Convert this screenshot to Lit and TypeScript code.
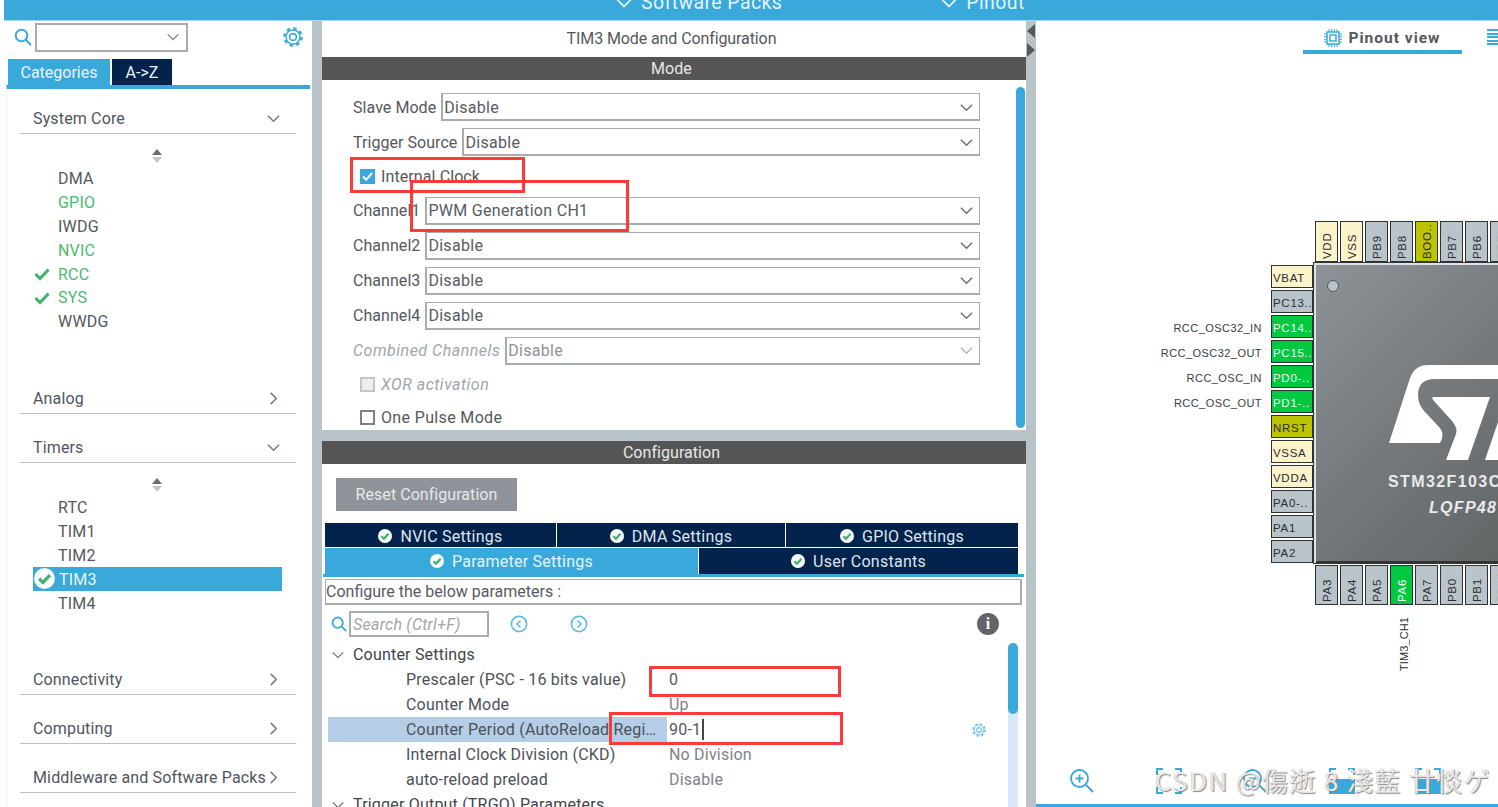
import { LitElement, html, css } from "lit";
import { customElement } from "lit/decorators.js";

const BLUE = "#39a9dc";
const chev = (dir: string = "down", color = "#7a7d80", s = 14) => {
  const pts = dir === "down" ? "2,5 8,11 14,5" : "5,2 11,8 5,14";
  return html`<svg width=${s} height=${s} viewBox="0 0 16 16" fill="none" stroke=${color} stroke-width="1.6"><polyline points=${pts}></polyline></svg>`;
};
const searchIcon = (s = 18) => html`<svg width=${s} height=${s} viewBox="0 0 18 18" fill="none" stroke=${BLUE} stroke-width="2"><circle cx="7.5" cy="7.5" r="5.8"></circle><path d="M11.8 11.8L17 17"></path></svg>`;
const gear = (s = 20, op = 1) => html`<svg width=${s} height=${s} viewBox="0 0 20 20" fill="none" stroke=${BLUE} opacity=${op}><circle cx="10" cy="10" r="8.6" stroke-width="2.4" stroke-dasharray="3.4 3.35"></circle><circle cx="10" cy="10" r="7" stroke-width="1.4"></circle><circle cx="10" cy="10" r="3.4" stroke-width="1.6"></circle></svg>`;
const okBadge = (s = 14) => html`<svg width=${s} height=${s} viewBox="0 0 14 14"><circle cx="7" cy="7" r="7" fill="#d8f0df"></circle><circle cx="7" cy="7" r="6.6" fill="#fff" opacity=".9"></circle><polyline points="3.4,7.2 6,9.6 10.6,4.8" fill="none" stroke="#3cb371" stroke-width="2.2"></polyline></svg>`;
const circArrow = (left: boolean) => html`<svg width="18" height="18" viewBox="0 0 18 18" fill="none" stroke=${BLUE} stroke-opacity=".8" stroke-width="1.6"><circle cx="9" cy="9" r="7.6"></circle><polyline points=${left ? "10.5,5.5 7,9 10.5,12.5" : "7.5,5.5 11,9 7.5,12.5"}></polyline></svg>`;
const bigCheck = html`<svg width="16" height="14" viewBox="0 0 16 14" fill="none" stroke="#3cb371" stroke-width="3"><polyline points="1.5,7 6,11.5 14.5,2.5"></polyline></svg>`;
const sortIcon = html`<svg width="12" height="14" viewBox="0 0 12 14"><polygon points="6,0 11,6 1,6" fill="#6a6d70"></polygon><polygon points="6,14 11,8 1,8" fill="#c4c6c8"></polygon></svg>`;

type Pin = [string, string];
const leftPins: Pin[] = [["VBAT","c"],["PC13..","g"],["PC14..","n"],["PC15..","n"],["PD0-..","n"],["PD1-..","n"],["NRST","o"],["VSSA","c"],["VDDA","c"],["PA0-..","g"],["PA1","g"],["PA2","g"]];
const topPins: Pin[] = [["VDD","c"],["VSS","c"],["PB9","g"],["PB8","g"],["BOO..","o"],["PB7","g"],["PB6","g"],["PB5","g"]];
const botPins: Pin[] = [["PA3","g"],["PA4","g"],["PA5","g"],["PA6","n"],["PA7","g"],["PB0","g"],["PB1","g"],["PB10","g"]];
const pinLabels: [string, number][] = [["RCC_OSC32_IN",2],["RCC_OSC32_OUT",3],["RCC_OSC_IN",4],["RCC_OSC_OUT",5]];
const CX = 1036, CY = 54;
const at = (x: number, y: number, w?: number, h?: number) =>
  `left:${x - CX}px;top:${y - CY}px;` + (w ? `width:${w}px;` : "") + (h ? `height:${h}px;` : "");

@customElement("app-root")
export class AppRoot extends LitElement {
  static styles = css`
    :host { display:block; position:relative; width:1498px; height:807px; overflow:hidden; background:#fff;
      font-family:Roboto,"Liberation Sans",sans-serif; font-size:16px; letter-spacing:.25px; color:#55585c; }
    * { box-sizing:border-box; }
    .top { height:21px; margin-left:4px; background:#39a9dc; border-bottom:1px solid #a9d8ef; overflow:hidden; display:flex; padding-left:611px; color:#e4f3fa; }
    .top-item { display:flex; align-items:center; gap:8px; font-size:19.5px; letter-spacing:.4px; line-height:22px; margin-top:-8px; height:22px; }
    .top-item + .top-item { margin-left:158px; }
    .main { display:flex; height:786px; }
    .left { width:308px; margin-left:4px; display:flex; flex-direction:column; }
    .search { height:38px; flex:none; display:flex; align-items:center; padding:0 9px 6px 10px; }
    .search svg:first-child { flex:none; }
    .combo { width:153px; height:29px; border:2px solid #a8acaf; margin-left:3px; display:flex; align-items:center; justify-content:flex-end; padding-right:6px; }
    .search .cog { margin-left:auto; display:flex; }
    .ltabs { display:flex; flex:none; height:26px; margin-left:4px; gap:2px; color:#e9f5fb; letter-spacing:0; }
    .ltab { display:flex; align-items:center; justify-content:center; width:60px; background:#03224c; }
    .ltab.on { width:102px; background:#39a9dc; }
    .panel { flex:1; min-height:0; overflow:hidden; margin:0 2px; border-top:4px solid #39a9dc; padding:0 14px 0 13px; border-left:1px solid #f0f0f0; }
    .head { height:28px; padding:0 15px 3px 13px; border-bottom:1px solid #b9c3ca; display:flex; align-items:center; justify-content:space-between; margin-top:21px; color:#4f5560; letter-spacing:.15px; white-space:nowrap; }
    .head.first { margin-top:17px; }
    .list { display:flex; flex-direction:column; }
    .sort { height:14px; margin:15px 0 4px; display:flex; justify-content:center; padding-right:3px; flex:none; }
    .sys { height:231px; } .tim { height:183px; }
    .item { height:23.8px; margin-left:13px; width:249px; display:flex; align-items:center; padding-left:25px; position:relative; letter-spacing:.2px; flex:none; }
    .item.green { color:#4cb96c; }
    .item .mark { position:absolute; left:1px; top:5px; display:flex; }
    .item.sel { background:#39a9dc; color:#e9f5fb; padding-left:26px; }
    .item.sel .mark { top:1px; left:1px; }
    .split { width:10px; background:#b9c3ca; position:relative; flex:none; }
    .tri { position:absolute; left:1px; width:0; height:0; border-top:7px solid transparent; border-bottom:7px solid transparent; }
    .tri.l { top:3px; border-right:8px solid #55585a; }
    .tri.r { top:22px; border-left:8px solid #55585a; }
    .mid { width:704px; display:flex; flex-direction:column; background:#b9c3ca; }
    .title { height:36px; flex:none; background:#fff; display:flex; align-items:center; justify-content:center; letter-spacing:-.1px; padding:0 5px 1px 0; }
    .bar { height:23px; background:#545554; color:#e8e8e8; display:flex; align-items:center; justify-content:center; letter-spacing:.05px; flex:none; padding-right:5px; }
    .mode { height:350px; background:#fff; display:flex; flex:none; }
    .form { width:627px; margin:13px 0 0 31px; display:flex; flex-direction:column; gap:7px; }
    .row { display:flex; align-items:center; gap:5px; height:28px; white-space:nowrap; letter-spacing:.05px; padding-top:0; }
    .row.dis { color:#a3a6a9; font-style:italic; letter-spacing:.5px; }
    .sel-box { flex:1; height:28px; border:2px solid #a8acaf; border-top-width:1.5px; border-right-width:1.5px; display:flex; align-items:center; justify-content:space-between; padding:1px 5px 0 1px; font-style:normal; color:#585b60; letter-spacing:.3px; }
    .row.dis .sel-box { color:#8e9195; border-color:#a8acaf; letter-spacing:.3px; }
    .chk { display:flex; align-items:center; gap:6px; margin-left:7px; white-space:nowrap; }
    .box { width:15px; height:15px; border:2px solid #7f8285; background:#fff; flex:none; display:flex; }
    .box.on { border:0; background:#39a9dc; }
    .box.dim { border-color:#c2c6c9; background:#eceeef; }
    .chk.c1 { height:27px; letter-spacing:.1px; }
    .chk.c2 { height:26px; color:#a3a6a9; font-style:italic; letter-spacing:.5px; }
    .chk.c3 { height:26px; letter-spacing:.35px; padding-top:1px; }
    .sb1 { width:9px; height:341px; margin:7px 0 0 36px; border-radius:5px; background:#39a9dc; }
    .gap { height:11px; flex:none; }
    .cfg { flex:1; background:#fff; display:flex; flex-direction:column; overflow:hidden; min-height:0; }
    .reset { width:181px; height:33px; margin:14px 0 0 14px; background:#8e9499; color:#e6e8ea; display:flex; align-items:center; justify-content:center; letter-spacing:.05px; flex:none; }
    .t1, .t2 { display:grid; width:693px; margin-left:3px; gap:1px; color:#dfe6ee; flex:none; }
    .t1 { grid-template-columns:231px 228px 232px; height:24px; margin-top:12px; }
    .t2 { grid-template-columns:373px 319px; height:26px; margin-top:1px; }
    .tb { background:#03224c; display:flex; align-items:center; justify-content:center; gap:8px; }
    .t1 .tb { padding-top:2px; }
    .tb.on { background:#39a9dc; color:#e6f4fa; }
    .rule { height:3px; background:#39a9dc; margin:0 2px 0 1px; flex:none; }
    .desc { height:26px; margin:2px 4px 0 3px; border:2px solid #a8acaf; border-top-width:1px; border-left-width:1px; display:flex; align-items:center; flex:none; color:#575a5f; white-space:nowrap; letter-spacing:0; }
    .tools { height:26px; margin-top:6px; display:flex; align-items:center; padding-left:9px; position:relative; flex:none; }
    .sinput { width:140px; height:26px; border:2px solid #a8acaf; margin-left:2px; display:flex; align-items:center; padding-left:2px; font-style:italic; color:#a3a6a9; }
    .ar1 { margin-left:21px; display:flex; } .ar2 { margin-left:42px; display:flex; }
    .info { margin-left:auto; margin-right:27px; width:22px; height:22px; border-radius:50%; background:#626467; color:#fff; font:700 16px/22px "Liberation Serif",serif; text-align:center; letter-spacing:0; }
    .treewrap { flex:1; display:flex; margin-top:5px; min-height:0; }
    .tree { width:680px; margin-left:6px; }
    .node { height:25px; display:flex; align-items:center; gap:8px; padding-left:3px; color:#3f434a; white-space:nowrap; letter-spacing:.2px; }
    .leaf { height:25px; display:flex; align-items:center; white-space:nowrap; letter-spacing:.2px; }
    .leaf.hl { background:linear-gradient(#b5cde6,#b5cde6) 0 0/339px 100% no-repeat; }
    .lab { width:339px; padding-left:78px; flex:none; overflow:hidden; color:#4d5157; }
    .val { padding-left:2px; color:#808387; }
    .val.dark { color:#55585c; padding-left:2px; }
    .val.edit { color:#55585c; display:flex; align-items:center; }
    .caret { width:1.5px; height:21px; background:#444; margin-left:1px; }
    .leaf .cog { margin-left:auto; margin-right:22px; display:flex; }
    .sb2 { width:10px; background:#d9e8f5; border-radius:5px 5px 0 0; margin-top:1px; }
    .sb2 div { height:71px; background:#39a9dc; border-radius:5px; }
    .right { flex:1; display:flex; flex-direction:column; min-width:0; position:relative; }
    .rt { height:33px; display:flex; flex:none; padding-left:267px; overflow:hidden; }
    .ptab { width:159px; flex:none; border-bottom:4px solid #39a9dc; display:flex; align-items:center; justify-content:center; gap:6px; font-weight:700; font-size:15.5px; letter-spacing:1px; color:#55585c; padding-top:4px; }
    .stripes { flex:none; margin-left:25px; margin-top:8px; width:11px; height:17px; background:repeating-linear-gradient(#39a9dc 0 2px,#fff 2px 3.5px); }
    .canvas { position:relative; flex:1; overflow:hidden; min-height:0; }
    .pin { position:absolute; border:1.5px solid #2f3133; color:#2c2e30; font-size:11.5px; letter-spacing:.7px; font-family:"Liberation Sans",sans-serif; display:flex; white-space:nowrap; overflow:hidden; }
    .pin.c { background:#fdf3cb; } .pin.g { background:#b9c3ca; } .pin.n { background:#00c83f; color:#f2fff5; } .pin.o { background:#bcc400; }
    .pin.h { align-items:center; padding:2px 0 0 1px; }
    .pin.v { writing-mode:vertical-rl; transform:rotate(180deg); align-items:center; padding-top:2px; }
    .plabel { position:absolute; width:110px; text-align:right; font:11px/14px "Liberation Sans",sans-serif; letter-spacing:.45px; color:#3a3c3e; }
    .vlabel { position:absolute; writing-mode:vertical-rl; transform:rotate(180deg); font:11px/14px "Liberation Sans",sans-serif; letter-spacing:.1px; color:#2c2e30; }
    .chip { position:absolute; background:linear-gradient(135deg,#8d9398 0%,#74787b 45%,#5a5c5c 100%); border:1.5px solid #333; box-shadow:inset 2px 2px 0 #dfe2e4, inset 0 -2px 0 #333; }
    .dot { position:absolute; width:12px; height:12px; border-radius:50%; background:#b9c3ca; border:1px solid #55585a; }
    .logo { position:absolute; }
    .cname { position:absolute; color:#e8eaeb; font:700 16px/20px "Liberation Sans",sans-serif; letter-spacing:1.4px; white-space:nowrap; }
    .cpkg { position:absolute; color:#e8eaeb; font:italic 700 16px/20px "Liberation Sans",sans-serif; letter-spacing:1.3px; white-space:nowrap; }
    .zoombar { height:38px; display:flex; align-items:flex-start; gap:60.5px; padding:2px 0 0 33px; flex:none; }
    .zoombar svg { flex:none; }
    .btm { height:3px; background:#39a9dc; flex:none; }
    .mark-r { position:absolute; border:3px solid #fb3a3a; pointer-events:none; }
    .ra { left:350px; top:157px; width:175px; height:36px; }
    .rb { left:410px; top:180px; width:219px; height:52px; }
    .rc { left:649px; top:666px; width:192px; height:31px; }
    .rd { left:609px; top:712px; width:234px; height:33px; }
    .wm { position:absolute; left:1155px; top:761px; font:26px/38px "Noto Sans CJK TC","Noto Sans",sans-serif; letter-spacing:1.4px; color:rgba(255,255,255,.75); text-shadow:1px 1px 1px #8a8a8a, -0.5px -0.5px 0 #c8c8c8; white-space:nowrap; }
  `;

  private section(name: string, open: boolean, first = false, cls = "", items: any[] = []) {
    return html`<div class="head ${first ? "first" : ""}"><span>${name}</span>${chev(open ? "down" : "right", "#77797c", 15)}</div>
      ${open ? html`<div class="list ${cls}"><div class="sort">${sortIcon}</div>${items}</div>` : ""}`;
  }
  private item(name: string, kind = "") {
    const mark = kind === "check" ? html`<span class="mark">${bigCheck}</span>` : kind === "sel" ? html`<span class="mark">${okBadge(21)}</span>` : "";
    const cl = kind === "check" || kind === "green" ? "green" : kind === "sel" ? "sel" : "";
    return html`<div class="item ${cl}">${mark}${name}</div>`;
  }
  private select(label: string, value: string, dis = false) {
    return html`<div class="row ${dis ? "dis" : ""}"><span>${label}</span><div class="sel-box"><span>${value}</span>${chev("down", dis ? "#b5b8ba" : "#6f7275", 15)}</div></div>`;
  }
  private tab(name: string, on = false) {
    return html`<div class="tb ${on ? "on" : ""}">${okBadge()}<span>${name}</span></div>`;
  }
  private leaf(label: string, val: string, cls = "") {
    return html`<div class="leaf"><div class="lab">${label}</div><div class="val ${cls}">${val}</div></div>`;
  }

  render() {
    return html`
      <div class="top">
        <div class="top-item">${chev("down", "#e4f3fa", 18)}<span>Software Packs</span></div>
        <div class="top-item">${chev("down", "#e4f3fa", 18)}<span>Pinout</span></div>
      </div>
      <div class="main">
        <div class="left">
          <div class="search">${searchIcon()}<div class="combo">${chev("down")}</div><span class="cog">${gear()}</span></div>
          <div class="ltabs"><div class="ltab on">Categories</div><div class="ltab">A-&gt;Z</div></div>
          <div class="panel">
            ${this.section("System Core", true, true, "sys", [this.item("DMA"), this.item("GPIO", "green"), this.item("IWDG"), this.item("NVIC", "green"), this.item("RCC", "check"), this.item("SYS", "check"), this.item("WWDG")])}
            ${this.section("Analog", false)}
            ${this.section("Timers", true, false, "tim", [this.item("RTC"), this.item("TIM1"), this.item("TIM2"), this.item("TIM3", "sel"), this.item("TIM4")])}
            ${this.section("Connectivity", false)}
            ${this.section("Computing", false)}
            ${this.section("Middleware and Software Packs", false)}
          </div>
        </div>
        <div class="split"></div>
        <div class="mid">
          <div class="title">TIM3 Mode and Configuration</div>
          <div class="bar">Mode</div>
          <div class="mode">
            <div class="form">
              ${this.select("Slave Mode", "Disable")}
              ${this.select("Trigger Source", "Disable")}
              <div class="chk c1"><span class="box on"><svg width="15" height="15" viewBox="0 0 15 15" fill="none" stroke="#fff" stroke-width="2"><polyline points="3,7.5 6.2,10.8 12,4"></polyline></svg></span>Internal Clock</div>
              ${this.select("Channel1", "PWM Generation CH1")}
              ${this.select("Channel2", "Disable")}
              ${this.select("Channel3", "Disable")}
              ${this.select("Channel4", "Disable")}
              ${this.select("Combined Channels", "Disable", true)}
              <div class="chk c2"><span class="box dim"></span>XOR activation</div>
              <div class="chk c3"><span class="box"></span>One Pulse Mode</div>
            </div>
            <div class="sb1"></div>
          </div>
          <div class="gap"></div>
          <div class="bar">Configuration</div>
          <div class="cfg">
            <div class="reset">Reset Configuration</div>
            <div class="t1">${this.tab("NVIC Settings")}${this.tab("DMA Settings")}${this.tab("GPIO Settings")}</div>
            <div class="t2">${this.tab("Parameter Settings", true)}${this.tab("User Constants")}</div>
            <div class="rule"></div>
            <div class="desc">Configure the below parameters :</div>
            <div class="tools">${searchIcon(16)}<div class="sinput">Search (Ctrl+F)</div><span class="ar1">${circArrow(true)}</span><span class="ar2">${circArrow(false)}</span><div class="info">i</div></div>
            <div class="treewrap">
              <div class="tree">
                <div class="node">${chev("down", "#77797c", 14)}<span>Counter Settings</span></div>
                ${this.leaf("Prescaler (PSC - 16 bits value)", "0", "dark")}
                ${this.leaf("Counter Mode", "Up")}
                <div class="leaf hl"><div class="lab">Counter Period (AutoReload Regi…</div><div class="val edit">90-1<span class="caret"></span></div><span class="cog">${gear(14, 0.7)}</span></div>
                ${this.leaf("Internal Clock Division (CKD)", "No Division")}
                ${this.leaf("auto-reload preload", "Disable")}
                <div class="node">${chev("down", "#77797c", 14)}<span>Trigger Output (TRGO) Parameters</span></div>
              </div>
              <div class="sb2"><div></div></div>
            </div>
          </div>
        </div>
        <div class="split"><span class="tri l"></span><span class="tri r"></span></div>
        <div class="right">
          <div class="rt">
            <div class="ptab"><svg width="18" height="18" viewBox="0 0 18 18" fill="none" stroke="#39a9dc"><rect x="3" y="3" width="12" height="12" stroke-width="1.5"></rect><rect x="6" y="6" width="6" height="6" stroke-width="1.5"></rect><path d="M5 0v3M7.7 0v3M10.3 0v3M13 0v3M5 15v3M7.7 15v3M10.3 15v3M13 15v3M0 5h3M0 7.7h3M0 10.3h3M0 13h3M15 5h3M15 7.7h3M15 10.3h3M15 13h3" stroke-width="1"></path></svg>Pinout view</div>
            <div class="stripes"></div>
          </div>
          <div class="canvas">
            ${topPins.map((p, i) => html`<div class="pin v ${p[1]}" style=${at(1315 + i * 25, 221, 23, 41)}>${p[0]}</div>`)}
            ${botPins.map((p, i) => html`<div class="pin v ${p[1]}" style=${at(1315 + i * 25, 565, 23, 40)}>${p[0]}</div>`)}
            ${leftPins.map((p, i) => html`<div class="pin h ${p[1]}" style=${at(1271, 265 + i * 25, 42, 23)}>${p[0]}</div>`)}
            ${pinLabels.map(([t, i]) => html`<div class="plabel" style=${at(1152, 321 + (i - 2) * 25)}>${t}</div>`)}
            <div class="vlabel" style=${at(1397, 617)}>TIM3_CH1</div>
            <div class="chip" style=${at(1313, 262, 300, 302)}></div>
            <div class="dot" style=${at(1327, 280)}></div>
            <svg class="logo" style=${at(1385, 360, 113, 105)} width="113" height="105" viewBox="1385 360 113 105" fill="#fff">
              <path d="M1389 443L1410 378Q1415 365 1428 365L1498 365L1498 379L1435 379Q1418 379 1418 395Q1418 405 1425 412L1440 428Q1445 435 1440 443Z"></path>
              <path d="M1433 397L1490 397L1468 460L1446 460L1456 434Q1458 428 1452 421L1434 401Q1431 397 1433 397Z"></path>
              <path d="M1498 422L1485 460L1498 460Z"></path>
            </svg>
            <div class="cname" style=${at(1388, 472)}>STM32F103C8Tx</div>
            <div class="cpkg" style=${at(1429, 498)}>LQFP48</div>
          </div>
          <div class="zoombar">
            <svg width="26" height="26" viewBox="0 0 26 26" fill="none" stroke="#39a9dc" stroke-width="1.8"><circle cx="10.5" cy="10.5" r="8.5"></circle><path d="M17 17L24 24M10.5 6.5v8M6.5 10.5h8"></path></svg>
            <svg width="26" height="26" viewBox="0 0 26 26" fill="none" stroke="#39a9dc" stroke-width="2"><path d="M1 7V1H7M19 1H25V7M25 19V25H19M7 25H1V19"></path></svg>
            <svg width="26" height="26" viewBox="0 0 26 26" fill="none" stroke="#39a9dc" stroke-width="1.8"><circle cx="10.5" cy="10.5" r="8.5"></circle><path d="M17 17L24 24M6.5 10.5h8"></path></svg>
            <svg width="26" height="26" viewBox="0 0 26 26" fill="none" stroke="#39a9dc" stroke-width="2"><path d="M1 7V1H7M19 1H25V7"></path><rect x="1" y="12" width="24" height="13" fill="#39a9dc"></rect></svg>
            <svg width="26" height="26" viewBox="0 0 26 26" fill="none" stroke="#39a9dc" stroke-width="2"><path d="M1 7V1H7M19 1H25V7"></path><rect x="1" y="12" width="24" height="13" fill="#39a9dc"></rect></svg>
          </div>
          <div class="btm"></div>
        </div>
      </div>
      <div class="mark-r ra"></div><div class="mark-r rb"></div><div class="mark-r rc"></div><div class="mark-r rd"></div>
      <div class="wm">CSDN @傷逝 8 淺藍 廿惔ゲ</div>
    `;
  }
}
